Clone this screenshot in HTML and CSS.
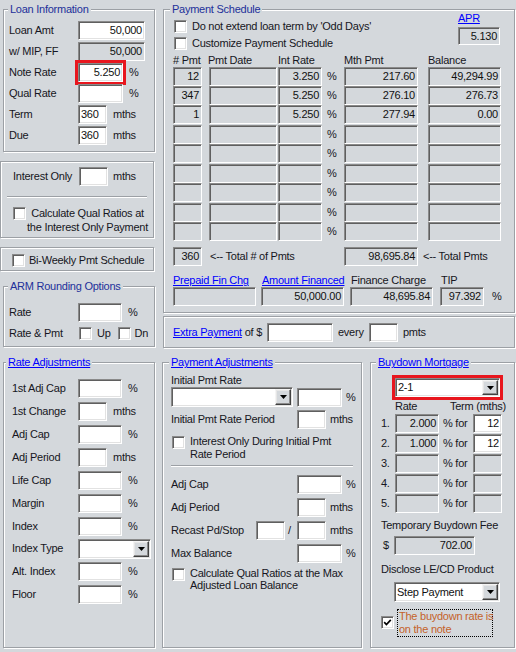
FILE: index.html
```html
<!DOCTYPE html>
<html>
<head>
<meta charset="utf-8">
<title>Loan</title>
<link rel="stylesheet" href="styles.css">
</head>
<body>
<div class="page">
  <div class="top">
    <div class="lcol">
      <fieldset class="grp loan">
        <legend>Loan Information</legend>
        <div class="rows g2">
          <div class="frow"><span class="lbl w69">Loan Amt</span><span class="tb w67">50,000</span></div>
          <div class="frow"><span class="lbl w69">w/ MIP, FF</span><span class="tb ro w67">50,000</span></div>
          <div class="frow"><span class="lbl w69">Note Rate</span><span class="tb w45 hl">5.250</span><span class="unit">%</span></div>
          <div class="frow"><span class="lbl w69">Qual Rate</span><span class="tb w45"></span><span class="unit">%</span></div>
          <div class="frow"><span class="lbl w69">Term</span><span class="tb w29 l">360</span><span class="unit">mths</span></div>
          <div class="frow"><span class="lbl w69">Due</span><span class="tb w29 l">360</span><span class="unit">mths</span></div>
        </div>
      </fieldset>

      <div class="box io">
        <div class="frow iorow"><span class="lbl w66">Interest Only</span><span class="tb w29"></span><span class="unit u5">mths</span></div>
        <div class="sep io-sep"></div>
        <div class="cbrow io-cb"><span class="cb"></span><span class="cbtext center">Calculate Qual Ratios at<br>the Interest Only Payment</span></div>
      </div>

      <div class="box bw"><span class="cb"></span><span class="bwt">Bi-Weekly Pmt Schedule</span></div>

      <fieldset class="grp arm">
        <legend>ARM Rounding Options</legend>
        <div class="frow"><span class="lbl w69">Rate</span><span class="tb w44"></span><span class="unit">%</span></div>
        <div class="frow armrp"><span class="lbl w70">Rate &amp; Pmt</span><span class="cb"></span><span class="ml5">Up</span><span class="cb ml7"></span><span class="ml4">Dn</span></div>
      </fieldset>
    </div>

    <div class="rcol">
      <fieldset class="grp ps">
        <legend>Payment Schedule</legend>
        <div class="pstop">
          <div class="pscb">
            <div class="cbrow17"><span class="cb"></span><span class="ml5">Do not extend loan term by 'Odd Days'</span></div>
            <div class="cbrow17"><span class="cb"></span><span class="ml5">Customize Payment Schedule</span></div>
          </div>
          <div class="apr">
            <span class="lnk">APR</span>
            <span class="tb ro aprbox">5.130</span>
          </div>
        </div>
        <div class="thead">
          <span class="c1">#&nbsp;Pmt</span><span class="c2 hd2">Pmt Date</span><span class="c3">Int Rate</span><span class="pc"></span><span class="c5">Mth Pmt</span><span class="c6">Balance</span>
        </div>
        <div class="trow"><span class="tb ro c1">12</span><span class="tb ro c2"></span><span class="tb ro c3">3.250</span><span class="pc">%</span><span class="tb ro c5">217.60</span><span class="tb ro c6">49,294.99</span></div>
        <div class="trow"><span class="tb ro c1">347</span><span class="tb ro c2"></span><span class="tb ro c3">5.250</span><span class="pc">%</span><span class="tb ro c5">276.10</span><span class="tb ro c6">276.73</span></div>
        <div class="trow"><span class="tb ro c1">1</span><span class="tb ro c2"></span><span class="tb ro c3">5.250</span><span class="pc">%</span><span class="tb ro c5">277.94</span><span class="tb ro c6">0.00</span></div>
        <div class="trow"><span class="tb ro c1"></span><span class="tb ro c2"></span><span class="tb ro c3"></span><span class="pc">%</span><span class="tb ro c5"></span><span class="tb ro c6"></span></div>
        <div class="trow"><span class="tb ro c1"></span><span class="tb ro c2"></span><span class="tb ro c3"></span><span class="pc">%</span><span class="tb ro c5"></span><span class="tb ro c6"></span></div>
        <div class="trow"><span class="tb ro c1"></span><span class="tb ro c2"></span><span class="tb ro c3"></span><span class="pc">%</span><span class="tb ro c5"></span><span class="tb ro c6"></span></div>
        <div class="trow"><span class="tb ro c1"></span><span class="tb ro c2"></span><span class="tb ro c3"></span><span class="pc">%</span><span class="tb ro c5"></span><span class="tb ro c6"></span></div>
        <div class="trow"><span class="tb ro c1"></span><span class="tb ro c2"></span><span class="tb ro c3"></span><span class="pc">%</span><span class="tb ro c5"></span><span class="tb ro c6"></span></div>
        <div class="trow"><span class="tb ro c1"></span><span class="tb ro c2"></span><span class="tb ro c3"></span><span class="pc">%</span><span class="tb ro c5"></span><span class="tb ro c6"></span></div>
        <div class="tot">
          <span class="tb ro c1">360</span><span class="t1">&lt;-- Total # of Pmts</span><span class="tb ro c5">98,695.84</span><span class="ml5">&lt;-- Total Pmts</span>
        </div>
        <div class="fin">
          <div class="col"><span class="lnk">Prepaid Fin Chg</span><span class="tb ro w83"></span></div>
          <div class="col"><span class="lnk fl">Amount Financed</span><span class="tb ro w83">50,000.00</span></div>
          <div class="col"><span class="fl">Finance Charge</span><span class="tb ro w83">48,695.84</span></div>
          <div class="col"><span class="fl">TIP</span><span class="tipr"><span class="tb ro w44">97.392</span><span class="ml8">%</span></span></div>
        </div>
      </fieldset>

      <div class="box extra">
        <span class="ex1"><span class="lnk">Extra Payment</span> of $</span><span class="tb w66"></span><span class="ex2">every</span><span class="tb w29"></span><span class="ml5">pmts</span>
      </div>
    </div>
  </div>

  <div class="bottom">
    <fieldset class="grp ra">
      <legend><span class="lnk">Rate Adjustments</span></legend>
      <div class="rows rarows">
        <div class="frow"><span class="lbl w66">1st Adj Cap</span><span class="tb w44"></span><span class="unit">%</span></div>
        <div class="frow"><span class="lbl w66">1st Change</span><span class="tb w29"></span><span class="unit">mths</span></div>
        <div class="frow"><span class="lbl w66">Adj Cap</span><span class="tb w44"></span><span class="unit">%</span></div>
        <div class="frow"><span class="lbl w66">Adj Period</span><span class="tb w29"></span><span class="unit">mths</span></div>
        <div class="frow"><span class="lbl w66">Life Cap</span><span class="tb w44"></span><span class="unit">%</span></div>
        <div class="frow"><span class="lbl w66">Margin</span><span class="tb w44"></span><span class="unit">%</span></div>
        <div class="frow"><span class="lbl w66">Index</span><span class="tb w44"></span><span class="unit">%</span></div>
        <div class="frow"><span class="lbl w66">Index Type</span><span class="combo w73"><span class="cv"></span><span class="cbtn"><svg width="7" height="4" viewBox="0 0 7 4"><path d="M0 0h7L3.5 4z" fill="#000"/></svg></span></span></div>
        <div class="frow"><span class="lbl w66">Alt. Index</span><span class="tb w44"></span><span class="unit">%</span></div>
        <div class="frow"><span class="lbl w66">Floor</span><span class="tb w44"></span><span class="unit">%</span></div>
      </div>
    </fieldset>

    <fieldset class="grp pa">
      <legend><span class="lnk">Payment Adjustments</span></legend>
      <div class="plain">Initial Pmt Rate</div>
      <div class="frow h20"><span class="combo w122"><span class="cv"></span><span class="cbtn"><svg width="7" height="4" viewBox="0 0 7 4"><path d="M0 0h7L3.5 4z" fill="#000"/></svg></span></span><span class="tb w45 ml4"></span><span class="ml4">%</span></div>
      <div class="frow mt3"><span class="lbl w126">Initial Pmt Rate Period</span><span class="tb w29"></span><span class="ml4">mths</span></div>
      <div class="cbrow pa-cb1"><span class="cb"></span><span class="cbtext lh125">Interest Only During Initial Pmt<br>Rate Period</span></div>
      <div class="sep pa-sep"></div>
      <div class="rows parows">
        <div class="frow"><span class="lbl w126">Adj Cap</span><span class="tb w45"></span><span class="ml4">%</span></div>
        <div class="frow"><span class="lbl w126">Adj Period</span><span class="tb w29"></span><span class="ml4">mths</span></div>
        <div class="frow"><span class="lbl w85">Recast Pd/Stop</span><span class="tb w29"></span><span class="slash">/</span><span class="tb w29"></span><span class="ml4">mths</span></div>
        <div class="frow"><span class="lbl w126">Max Balance</span><span class="tb w45"></span><span class="ml4">%</span></div>
      </div>
      <div class="cbrow pa-cb2"><span class="cb"></span><span class="cbtext lh125">Calculate Qual Ratios at the Max<br>Adjusted Loan Balance</span></div>
    </fieldset>

    <fieldset class="grp bd">
      <legend><span class="lnk">Buydown Mortgage</span></legend>
      <span class="combo bdcombo hl"><span class="cv">2-1</span><span class="cbtn"><svg width="7" height="4" viewBox="0 0 7 4"><path d="M0 0h7L3.5 4z" fill="#000"/></svg></span></span>
      <div class="bdh"><span class="rt">Rate</span><span>Term (mths)</span></div>
      <div class="bdrows">
        <div class="bdr"><span class="n">1.</span><span class="tb ro w44">2.000</span><span class="pf">% for</span><span class="tb w29">12</span></div>
        <div class="bdr"><span class="n">2.</span><span class="tb ro w44">1.000</span><span class="pf">% for</span><span class="tb w29">12</span></div>
        <div class="bdr"><span class="n">3.</span><span class="tb ro w44"></span><span class="pf">% for</span><span class="tb ro w29"></span></div>
        <div class="bdr"><span class="n">4.</span><span class="tb ro w44"></span><span class="pf">% for</span><span class="tb ro w29"></span></div>
        <div class="bdr"><span class="n">5.</span><span class="tb ro w44"></span><span class="pf">% for</span><span class="tb ro w29"></span></div>
      </div>
      <div class="plain bdfee">Temporary Buydown Fee</div>
      <div class="frow feerow"><span class="dol">$</span><span class="tb ro w81">702.00</span></div>
      <div class="plain bddis">Disclose LE/CD Product</div>
      <span class="combo w106 bdstep"><span class="cv">Step Payment</span><span class="cbtn"><svg width="7" height="4" viewBox="0 0 7 4"><path d="M0 0h7L3.5 4z" fill="#000"/></svg></span></span>
      <div class="noterow"><span class="cb"><svg width="9" height="9" viewBox="0 0 9 9"><path d="M1.2 4.2l2.2 2.3L7.8 1.8" fill="none" stroke="#000" stroke-width="1.7"/></svg></span><span class="note">The buydown rate is<br>on the note</span></div>
    </fieldset>
  </div>
</div>
</body>
</html>
```

FILE: styles.css
```css
* { box-sizing: border-box; }
html, body { margin: 0; padding: 0; }
body {
  width: 516px;
  height: 652px;
  overflow: hidden;
  background: #d4d8dc;
  font-family: "Liberation Sans", Arial, sans-serif;
  font-size: 11px;
  line-height: 13px;
  letter-spacing: -0.25px;
  color: #161622;
}
.page { display: flex; flex-direction: column; }
.top { display: flex; }
.lcol { width: 157px; flex: none; display: flex; flex-direction: column; }
.rcol { width: 352px; margin-left: 6px; flex: none; display: flex; flex-direction: column; }

.grp {
  margin: 0;
  padding: 0;
  min-width: 0;
  border: 1px solid #9ca0a5;
  box-shadow: inset 1px 1px 0 #fff, 1px 1px 0 #fff;
}
.grp > legend {
  padding: 0 2px;
  line-height: 13px;
  color: #22309a;
  background: #d4d8dc;
}
.lnk { color: #0000ff; text-decoration: underline; }
.box {
  border: 1px solid #9ca0a5;
  box-shadow: inset 1px 1px 0 #fff, 1px 1px 0 #fff;
}
.sep {
  height: 2px;
  border-top: 1px solid #9ca0a5;
  border-bottom: 1px solid #fff;
}

.rows { display: flex; flex-direction: column; }
.g2 { gap: 2px; }
.frow { display: flex; align-items: center; height: 19px; }
.h20 { height: 20px; }
.col { display: flex; flex-direction: column; }
.lbl { flex: none; white-space: nowrap; }
.w66 { width: 66px; }
.w69 { width: 69px; }
.w70 { width: 70px; }
.w85 { width: 85px; }
.w126 { width: 126px; }

.tb {
  display: block;
  flex: none;
  height: 19px;
  background: #fff;
  border: 1px solid;
  border-color: #8a8a8a #fff #fff #8a8a8a;
  box-shadow: inset 1px 1px 0 #5f5f5f, inset -1px -1px 0 #e2e2e2;
  padding: 0 2px;
  line-height: 17px;
  text-align: right;
  color: #111;
  white-space: nowrap;
  overflow: hidden;
}
.tb.ro { background: #d4d8dc; box-shadow: inset 1px 1px 0 #5f5f5f, inset -1px -1px 0 #d4d8dc; }
.tb.l { text-align: left; }
.w29 { width: 29px; }
.w44 { width: 44px; }
.w45 { width: 45px; }
.w66 { width: 66px; }
.w67 { width: 67px; }
.w73 { width: 73px; }
.w81 { width: 81px; }
.w83 { width: 83px; }
.w106 { width: 106px; }
.w122 { width: 122px; }
.hl { outline: 3px solid #e8161e; }

.unit { margin-left: 6px; }
.u5 { margin-left: 5px; }
.ml4 { margin-left: 4px; }
.ml5 { margin-left: 5px; }
.ml7 { margin-left: 7px; }
.ml8 { margin-left: 8px; }
.mt3 { margin-top: 3px; }

.cb {
  display: flex;
  align-items: center;
  justify-content: center;
  flex: none;
  width: 13px;
  height: 13px;
  background: #fff;
  border: 1px solid;
  border-color: #8a8a8a #fff #fff #8a8a8a;
  box-shadow: inset 1px 1px 0 #5f5f5f, inset -1px -1px 0 #e2e2e2;
}
.cbrow { display: flex; align-items: flex-start; }
.cbtext { flex: 1; white-space: nowrap; }
.center { text-align: center; }
.lh125 { line-height: 12.5px; }

.combo {
  display: flex;
  flex: none;
  align-items: center;
  justify-content: space-between;
  height: 20px;
  background: #fff;
  border: 1px solid;
  border-color: #8a8a8a #fff #fff #8a8a8a;
  box-shadow: inset 1px 1px 0 #5f5f5f, inset -1px -1px 0 #e2e2e2;
  padding: 1px 1px 1px 2px;
  color: #111;
}
.cv { white-space: nowrap; }
.cbtn {
  display: flex;
  align-items: center;
  justify-content: center;
  width: 16px;
  height: 16px;
  background: #d4d8dc;
  border: 1px solid;
  border-color: #f4f4f4 #404040 #404040 #f4f4f4;
  box-shadow: inset -1px -1px 0 #8a8a8a, inset 1px 1px 0 #e6e6e6;
}
.cbtn svg { display: block; }

/* Loan information */
.loan { margin: 3px 0 0 3px; width: 152px; padding: 5px 0 6px 5px; }
.loan > legend { margin-left: -1px; }

/* Interest only box */
.io { margin-top: 9px; width: 154px; padding: 5px 3px 3px 6px; }
.iorow { padding-left: 6px; }
.io-sep { margin-top: 10px; margin-right: 3px; }
.io-cb { margin-top: 8px; padding-left: 6px; }
.io-cb .cb { margin-top: 1px; }
.io-cb .cbtext { line-height: 14px; padding-right: 1px; }

/* Bi-weekly */
.bw { margin-top: 9px; width: 154px; padding: 6px 0 3px 11px; display: flex; align-items: center; }
.bwt { margin-left: 4px; }

/* ARM rounding */
.arm { margin: 9px 0 0 3px; width: 152px; padding: 10px 0 5px 5px; }
.arm > legend { margin-left: -1px; }
.armrp { margin-top: 4px; height: 15px; }

/* Payment schedule */
.ps { margin-top: 3px; width: 352px; padding: 2px 13px 6px 9px; }
.ps > legend { margin-left: -3px; }
.pstop { display: flex; justify-content: space-between; }
.cbrow17 { display: flex; align-items: center; height: 17px; }
.cbrow17 .cb { margin-left: 1px; }
.apr { display: flex; flex-direction: column; margin-top: -6px; margin-right: 1px; }
.aprbox { width: 42px; height: 18px; line-height: 16px; margin-top: 2px; }
.thead { display: flex; margin-top: 1.5px; height: 13px; }
.trow { display: flex; height: 19.44px; }
.c1 { width: 29px; flex: none; }
.c2 { width: 68px; margin-left: 7px; flex: none; }
.hd2 { margin-left: 6px; width: 69px; }
.c3 { width: 44px; margin-left: 1px; flex: none; }
.pc { width: 22px; padding-left: 5px; line-height: 19px; flex: none; }
.c5 { width: 74px; flex: none; }
.c6 { width: 73px; margin-left: 10px; flex: none; }
.tot { display: flex; align-items: center; height: 19px; margin-top: 6px; }
.t1 { width: 142px; padding-left: 8px; flex: none; }
.fin { display: grid; grid-template-columns: 88px 89px 90px auto; margin-top: 8px; }
.fl { padding-left: 1px; }
.tipr { display: flex; align-items: center; }

/* Extra payment */
.extra { margin-top: 3px; width: 352px; padding: 6px 0 5px 9px; display: flex; align-items: center; }
.ex1 { width: 94px; flex: none; white-space: nowrap; }
.ex2 { width: 36px; padding-left: 5px; flex: none; }

/* Bottom row */
.bottom { display: flex; margin-top: 8px; height: 292px; }
.ra { margin-left: 3px; width: 152px; padding: 10px 0 0 8px; }
.ra > legend { margin-left: -6px; }
.rarows { gap: 3.85px; }

.pa { margin-left: 7px; width: 200px; padding: 5px 8px 0 8px; }
.pa > legend { margin-left: -2px; }
.plain { white-space: nowrap; }
.pa-cb1 { margin-top: 6px; }
.pa-cb1 .cb, .pa-cb2 .cb { margin: 1px 5px 0 1px; }
.pa-sep { margin-top: 5px; }
.parows { margin-top: 8px; gap: 3.7px; }
.pa-cb2 { margin-top: 4px; }
.slash { width: 12px; padding-left: 3px; flex: none; }

.bd { margin-left: 8px; width: 145px; padding: 7px 0 0 10px; }
.bd > legend { margin-left: -5px; }
.bdcombo { width: 105px; height: 19px; margin: 2px 0 0 14px; }
.bdcombo .cbtn { height: 15px; }
.bdh { display: flex; margin-top: 2.5px; padding-left: 14px; }
.rt { width: 55px; }
.bdrows { display: flex; flex-direction: column; gap: 1px; margin-top: 1.5px; }
.bdr { display: flex; align-items: center; height: 19px; }
.n { width: 14px; flex: none; }
.pf { width: 34px; padding-left: 4px; flex: none; white-space: nowrap; }
.bdfee { margin-top: 5.5px; }
.feerow { margin-top: 4.5px; }
.dol { width: 13px; padding-left: 2px; flex: none; }
.bddis { margin-top: 7.5px; }
.bdstep { margin: 6.5px 0 0 13px; }
.noterow { display: flex; align-items: center; margin-top: 6.5px; }
.note {
  margin-left: 3px;
  width: 96px;
  border: 1px dotted #000;
  padding: 0 1px;
  color: #c4622a;
  line-height: 13px;
  white-space: nowrap;
}
```
